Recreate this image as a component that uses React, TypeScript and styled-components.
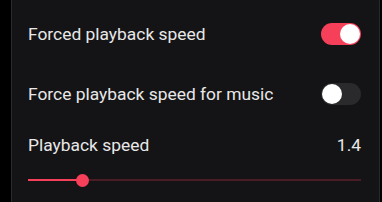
import React from 'react';
import styled, { createGlobalStyle } from 'styled-components';

const C = {
  outer: '#000000',
  panel: '#141416',
  edge: '#2a2a2d',
  text: '#e8e8e8',
  accent: '#f6405a',
  accentDim: '#4a1d26',
  offTrack: '#2a2a2c',
  knob: '#ffffff',
};

const GlobalStyle = createGlobalStyle`
  * { box-sizing: border-box; }
  html, body { margin: 0; padding: 0; background: ${C.outer}; }
  body { font-family: Roboto, 'Noto Sans', Arial, sans-serif; }
`;

const Frame = styled.div`
  display: flex;
  width: 382px;
  height: 202px;
  padding-left: 11px;
  padding-right: 2px;
  background: ${C.outer};
`;

const Panel = styled.div`
  flex: 1;
  background: ${C.panel};
  border-left: 1px solid ${C.edge};
  border-right: 1px solid ${C.edge};
  padding: 4px 18px 0 16px;
  display: flex;
  flex-direction: column;
`;

const Row = styled.div`
  height: 60px;
  display: flex;
  align-items: center;
  justify-content: space-between;
`;

const Label = styled.span`
  color: ${C.text};
  font-size: 17.4px;
  line-height: 20px;
`;

const Track = styled.div<{ $on: boolean }>`
  width: 40px;
  height: 22px;
  border-radius: 11px;
  padding: 1px 1px;
  display: flex;
  justify-content: ${p => (p.$on ? 'flex-end' : 'flex-start')};
  align-items: center;
  background: ${p => (p.$on ? C.accent : C.offTrack)};
`;

const Knob = styled.div`
  width: 20px;
  height: 20px;
  border-radius: 50%;
  background: ${C.knob};
`;

const SpeedHead = styled.div`
  display: flex;
  justify-content: space-between;
  align-items: center;
  padding-top: 11px;
`;

const Slider = styled.div`
  position: relative;
  height: 20px;
  margin-top: 15px;
  display: flex;
  align-items: center;
`;

const Rail = styled.div`
  flex: 1;
  height: 2px;
  background: ${C.accentDim};
  position: relative;
`;

const Fill = styled.div`
  position: absolute;
  left: 0;
  top: 0;
  height: 2px;
  background: ${C.accent};
`;

const Thumb = styled.div`
  position: absolute;
  top: 50%;
  width: 13px;
  height: 13px;
  margin-left: -6.5px;
  margin-top: -6.5px;
  border-radius: 50%;
  background: ${C.accent};
`;

const Toggle = ({ on }: { on: boolean }) => (
  <Track $on={on}>
    <Knob />
  </Track>
);

export default function App() {
  const pct = (55 / 333) * 100;
  return (
    <>
      <GlobalStyle />
      <Frame>
        <Panel>
          <Row>
            <Label>Forced playback speed</Label>
            <Toggle on />
          </Row>
          <Row>
            <Label>Force playback speed for music</Label>
            <Toggle on={false} />
          </Row>
          <SpeedHead>
            <Label>Playback speed</Label>
            <Label>1.4</Label>
          </SpeedHead>
          <Slider>
            <Rail>
              <Fill style={{ width: `${pct}%` }} />
              <Thumb style={{ left: `${pct}%` }} />
            </Rail>
          </Slider>
        </Panel>
      </Frame>
    </>
  );
}
